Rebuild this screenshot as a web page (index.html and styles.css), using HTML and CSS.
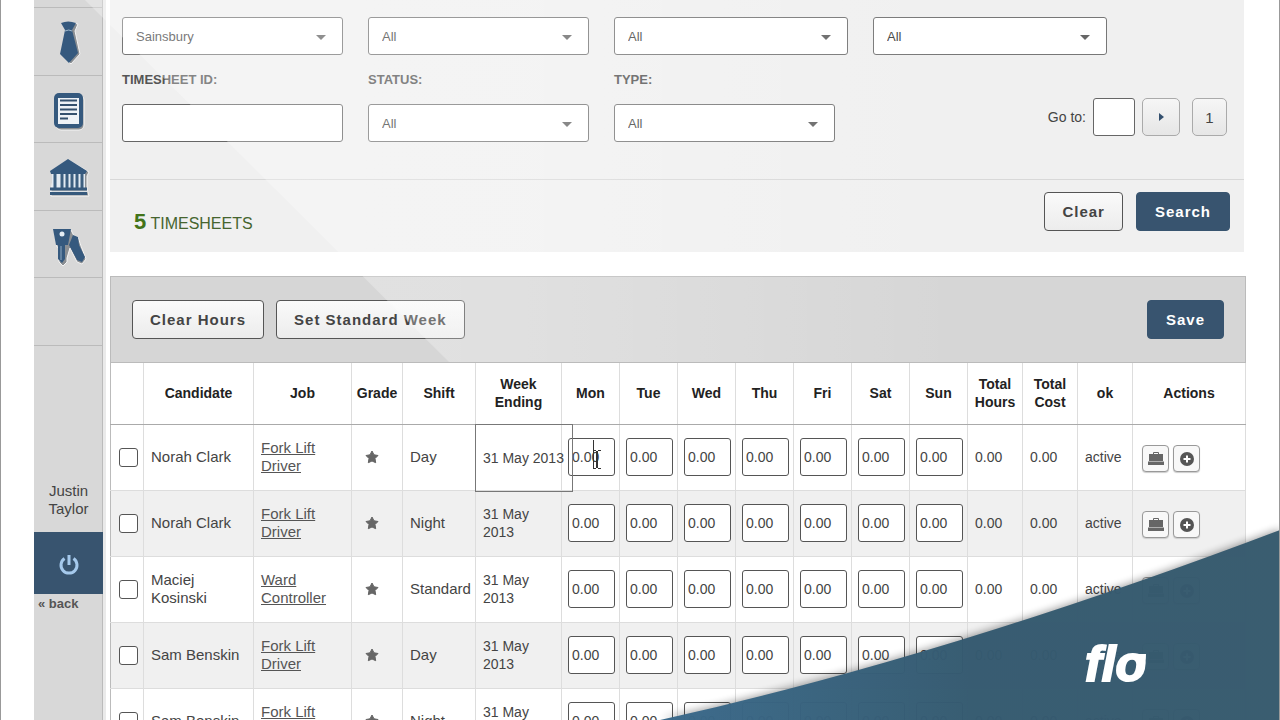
FILE: index.html
```html
<!DOCTYPE html>
<html lang="en">
  <head>
    <meta charset="UTF-8" />
    <meta name="viewport" content="width=device-width, initial-scale=1.0" />
    <title>Timesheets</title>
    <link rel="stylesheet" href="styles.css">
  </head>
  <body>
    <aside class="sidebar">
      <nav class="side-nav">
        <a href="#" aria-label="Candidates">
          <svg width="26" height="44" viewBox="0 0 26 44">
            <path class="icon-edge" d="M6 3q7-3 15 0l-3 7 5 23-9 10-9-9 4-24z" transform="translate(1 0)" />
            <path class="icon-fill" d="M5 2q7-3 15 0l-4 7 6 23-9 10-9-9 5-24z" />
            <path d="M9 10q4-2 7 0" fill="none" stroke="#9fb8cc" />
          </svg>
        </a>
        <a href="#" aria-label="Timesheets">
          <svg width="34" height="40" viewBox="0 0 34 40">
            <rect class="icon-edge" x="4" y="4" width="28" height="35" rx="5" />
            <rect class="icon-fill" x="2" y="2" width="29" height="35" rx="5" />
            <rect x="6" y="7" width="21" height="26" fill="#eef2f7" />
            <path d="M8 9.500h17M8 14h17M8 18.500h17M8 23h17M8 27.500h8" stroke="#34506e" stroke-width="2" />
          </svg>
        </a>
        <a href="#" aria-label="Clients">
          <svg width="42" height="42" viewBox="0 0 42 42">
            <path class="icon-edge" d="M21 3l20 12-2 4v13l2 7H3v-7l3-13-3-4z" />
            <path class="icon-fill" d="M20 2l19 12-2 3H3l-1-3z" />
            <path d="M4 17h33v14H4z" fill="#e3ebf2" />
            <path d="M7 17v14M14 17v14M19 17v14M24 17v14M29 17v14M34 17v14" stroke="#3c5f80" stroke-width="3" />
            <path d="M2 32h37M2 36.500h37" stroke="#36597c" stroke-width="3" />
            <path d="M2 34.300h37" stroke="#f0f4f8" />
          </svg>
        </a>
        <a href="#" aria-label="Access">
          <svg width="36" height="40" viewBox="0 0 36 40">
            <path class="icon-edge" d="M3 4h17l3 6 4 1 3 9 5 13-4 5-5-2-7-14-3 10v4l-4 4-4-4V21H6z" />
            <path class="icon-fill" d="M2 3h18l-3 16h-3v14l-3 4-4-4V19H5zM22 9l5 2 1 8 6 12-3 5-5-2-8-15z" />
            <circle cx="11" cy="8" r="2.500" fill="#e5edf4" />
            <path d="M10 20v14" stroke="#8faac2" />
          </svg>
        </a>
        <span></span>
      </nav>
      <p class="user-name">Justin<br>Taylor</p>
      <button class="power" aria-label="Log out">
        <svg width="22" height="22" viewBox="0 0 22 22" fill="none" stroke="#a5c9ec" stroke-width="3">
          <path d="M6.500 4.500a8 8 0 1 0 9 0M11 1v10" />
        </svg>
      </button>
      <a class="back" href="#">« back</a>
    </aside>

    <main>
      <section class="filters">
        <div class="filter-row">
          <div class="select"><select aria-label="Client"><option>Sainsbury</option></select></div>
          <div class="select"><select aria-label="Site"><option>All</option></select></div>
          <div class="select wide"><select aria-label="Job"><option>All</option></select></div>
          <div class="select wide"><select aria-label="Candidate"><option>All</option></select></div>
        </div>
        <div class="filter-row second">
          <div class="field">
            <label for="timesheet-id">TIMESHEET ID:</label>
            <input type="text" id="timesheet-id" />
          </div>
          <div class="field">
            <label for="status">STATUS:</label>
            <div class="select"><select id="status"><option>All</option></select></div>
          </div>
          <div class="field">
            <label for="type">TYPE:</label>
            <div class="select"><select id="type"><option>All</option></select></div>
          </div>
          <div class="pager">
            <label for="page">Go to:</label>
            <input type="text" id="page" />
            <button class="page-btn" aria-label="Go"><span class="arrow"></span></button>
            <button class="page-btn number">1</button>
          </div>
        </div>
        <div class="filter-footer">
          <p class="count"><strong>5</strong> TIMESHEETS</p>
          <button class="btn">Clear</button>
          <button class="btn primary">Search</button>
        </div>
      </section>

      <section class="sheets">
        <div class="toolbar">
          <button class="btn">Clear Hours</button>
          <button class="btn">Set Standard Week</button>
          <button class="btn primary">Save</button>
        </div>
        <table>
          <colgroup>
            <col class="c-check"><col class="c-name"><col class="c-job"><col class="c-grade"><col class="c-shift"><col class="c-week">
            <col class="c-day" span="7">
            <col class="c-total" span="3"><col>
          </colgroup>
          <thead>
            <tr>
              <th></th><th>Candidate</th><th>Job</th><th>Grade</th><th>Shift</th><th>Week Ending</th>
              <th>Mon</th><th>Tue</th><th>Wed</th><th>Thu</th><th>Fri</th><th>Sat</th><th>Sun</th>
              <th>Total Hours</th><th>Total Cost</th><th>ok</th><th>Actions</th>
            </tr>
          </thead>
          <tbody id="rows"></tbody>
        </table>
      </section>
    </main>

    <div class="sheen"></div>
    <svg class="corner" width="620" height="190" viewBox="0 0 620 190">
      <defs>
        <linearGradient id="blue">
          <stop offset="0" stop-color="#3b6a8b" />
          <stop offset="0.5" stop-color="#355a70" />
          <stop offset="1" stop-color="#375a6e" />
        </linearGradient>
      </defs>
      <path class="wedge" d="M0 190Q285 127 620 0V190z" fill="url(#blue)" />
      <text class="logo" x="425" y="151">flo</text>
      <path d="M472 124h14q0 9-2 15l-5-7z" fill="#fff" />
    </svg>

    <script>
      const days = ['Mon', 'Tue', 'Wed', 'Thu', 'Fri', 'Sat', 'Sun'];
      const timesheets = [
        { name: 'Norah Clark', job: 'Fork Lift Driver', shift: 'Day', open: true },
        { name: 'Norah Clark', job: 'Fork Lift Driver', shift: 'Night' },
        { name: 'Maciej Kosinski', job: 'Ward Controller', shift: 'Standard' },
        { name: 'Sam Benskin', job: 'Fork Lift Driver', shift: 'Day' },
        { name: 'Sam Benskin', job: 'Fork Lift Driver', shift: 'Night' }
      ];

      const star = '<svg width="14" height="14" viewBox="0 0 14 14"><path d="M7 1l2 3.800 4 .700-3 3 .700 4.200L7 11l-3.700 1.700L4 8.500l-3-3 4-.700z" fill="#666" stroke="#666" stroke-linejoin="round"/></svg>';
      const briefcase = '<svg width="16" height="16" viewBox="0 0 16 16"><path d="M5.500 3.500v-2h5v2" fill="none" stroke="#666"/><path d="M1 3h14v7H1zM0 10.500h16V14H0z" fill="#666"/></svg>';
      const plus = '<svg width="16" height="16" viewBox="0 0 16 16"><circle cx="8" cy="8" r="7" fill="#555"/><path d="M8 4.500v7M4.500 8h7" stroke="#fff" stroke-width="2"/></svg>';
      const cursor = '<svg class="cursor" width="12" height="30" viewBox="0 0 12 30" fill="none" stroke="#333"><path d="M2.500 0v28M2 10.500h3M7 10.500h3M2 28.500h3M7 28.500h3" /><path d="M6 11v17" stroke-width="2"/></svg>';

      document.getElementById('rows').innerHTML = timesheets.map(t => `
        <tr>
          <td class="check"><input type="checkbox" aria-label="Select ${t.name}" /></td>
          <td>${t.name}</td>
          <td><a href="#">${t.job}</a></td>
          <td class="grade">${star}</td>
          <td>${t.shift}</td>
          <td class="week">${t.open ? '<div class="week-open">31 May 2013</div>' : '31 May 2013'}</td>
          ${days.map((d, i) => `<td class="day"><input type="text" value="0.00" aria-label="${d}" />${t.open && i === 0 ? cursor : ''}</td>`).join('')}
          <td class="total">0.00</td>
          <td class="total">0.00</td>
          <td class="total">active</td>
          <td class="actions"><div><button aria-label="Job">${briefcase}</button><button aria-label="Add">${plus}</button></div></td>
        </tr>`).join('');
    </script>
  </body>
</html>
```
FILE: styles.css
```css
* {
  box-sizing: border-box;
}
body {
  font-family: "Liberation Sans", Arial, sans-serif;
  font-size: 15px;
  line-height: 18px;
  color: #444;
  background-color: #fff;
  margin: 0;
  padding: 0 33px;
  height: 100vh;
  border-left: 1px solid #999;
  border-right: 1px solid #999;
  display: flex;
  position: relative;
  overflow: hidden;
}
p {
  margin: 0;
}
button, input, select {
  font-family: inherit;
  color: #444;
}

/* sidebar */
.sidebar {
  width: 72px;
  flex: none;
  background-color: #d8d8d8;
  border-right: 3px solid #eaeaea;
  box-shadow: inset -1px 0 0 #bbb;
  padding-top: 7px;
  display: flex;
  flex-direction: column;
}
.side-nav {
  height: 339px;
  display: grid;
  grid-template-rows: repeat(5, 1fr);
  border-bottom: 1px solid #bbb;
}
.side-nav a, .side-nav span {
  border-top: 1px solid #bbb;
  padding-top: 4px;
  display: flex;
  align-items: center;
  justify-content: center;
}
.icon-edge {
  fill: #8b8f93;
  stroke: #f3f3f3;
}
.icon-fill {
  fill: #35597e;
}
.user-name {
  margin-top: 136px;
  margin-bottom: 14px;
  text-align: center;
}
.power {
  background-color: #38546f;
  border: none;
  height: 62px;
  padding: 4px 0 0;
  display: flex;
  align-items: center;
  justify-content: center;
}
.back {
  font-size: 13px;
  line-height: 20px;
  font-weight: bold;
  color: #555;
  text-decoration: none;
  margin-left: 4px;
}

main {
  flex: 1;
  min-width: 0;
  margin-left: 4px;
}

/* filters */
.filters {
  background-color: #f0f0f0;
  padding-top: 17px;
  margin-right: 2px;
}
.filter-row {
  display: flex;
  gap: 25px;
  padding: 0 17px 0 12px;
}
.second {
  margin-top: 16px;
  padding-bottom: 37px;
  align-items: flex-end;
}
.select {
  position: relative;
  width: 221px;
}
.wide {
  width: 234px;
}
.select select {
  appearance: none;
  width: 100%;
  height: 38px;
  padding: 0 13px;
  font-size: 13px;
  background-color: #fff;
  border: 1px solid #777;
  border-radius: 3px;
}
.select::after {
  content: "";
  position: absolute;
  right: 17px;
  top: 18px;
  border: 5px solid transparent;
  border-top-color: #666;
  border-bottom: none;
}
.field {
  width: 221px;
}
.field label {
  display: block;
  font-size: 13px;
  font-weight: bold;
  color: #555;
  margin-bottom: 15px;
}
.field input, .pager input {
  display: block;
  width: 100%;
  height: 38px;
  background-color: #fff;
  border: 1px solid #666;
  border-radius: 3px;
}
.pager {
  margin-left: auto;
  margin-bottom: 6px;
  display: flex;
  align-items: center;
  gap: 7px;
  font-size: 14px;
}
.pager input {
  width: 42px;
}
.page-btn {
  width: 38px;
  height: 38px;
  padding: 0;
  background: linear-gradient(#f6f6f6, #e6e6e6);
  border: 1px solid #aaa;
  border-radius: 5px;
  font-size: 15px;
  display: flex;
  align-items: center;
  justify-content: center;
}
.number {
  width: 35px;
  margin-left: 5px;
}
.arrow {
  border: 4px solid transparent;
  border-left: 5px solid #34506e;
  border-right: none;
}
.filter-footer {
  border-top: 1px solid #d8d8d8;
  height: 73px;
  padding: 12px 14px 0 24px;
  display: flex;
  align-items: flex-start;
  gap: 13px;
}
.count {
  flex: 1;
  padding-top: 11px;
  font-size: 16px;
  line-height: 38px;
  color: #46652f;
}
.count strong {
  font-size: 22px;
  color: #43741a;
}
.btn {
  height: 39px;
  padding: 0 17px;
  font-size: 15px;
  font-weight: bold;
  letter-spacing: 1px;
  background: linear-gradient(#fafafa, #ececec);
  border: 1px solid #555;
  border-radius: 4px;
}
.primary {
  padding: 0 18px;
  color: #fff;
  background: #38546f;
  border-color: #38546f;
}

/* timesheet table */
.sheets {
  margin-top: 24px;
}
.toolbar {
  background-color: #d6d6d6;
  border: 1px solid #bbb;
  height: 87px;
  padding: 0 21px;
  display: flex;
  align-items: center;
  gap: 12px;
}
.toolbar .primary {
  margin-left: auto;
}
table {
  width: 100%;
  table-layout: fixed;
  border-collapse: collapse;
  border-left: 1px solid #bbb;
  border-right: 1px solid #bbb;
}
.c-check { width: 33px; }
.c-name { width: 110px; }
.c-job { width: 98px; }
.c-grade { width: 51px; }
.c-shift { width: 73px; }
.c-week { width: 86px; }
.c-day { width: 58px; }
.c-total { width: 55px; }
th {
  height: 61px;
  padding: 0 2px;
  font-size: 14px;
  color: #222;
  border-right: 1px solid #ddd;
  border-bottom: 1px solid #aaa;
}
td {
  height: 66px;
  padding: 0 4px 0 7px;
  border-right: 1px solid #ddd;
  border-bottom: 1px solid #ddd;
}
tbody tr:nth-child(even) {
  background-color: #f0f0f0;
}
td a {
  color: #555;
}
td.check, td.day {
  padding: 0 0 0 6px;
  position: relative;
}
.check input {
  appearance: none;
  display: block;
  width: 19px;
  height: 19px;
  margin: 0 0 0 2px;
  background-color: #fff;
  border: 1px solid #555;
  border-radius: 3px;
}
.day input {
  display: block;
  width: 47px;
  height: 38px;
  padding: 0 3px;
  font-size: 14px;
  background-color: #fff;
  border: 1px solid #555;
  border-radius: 3px;
}
td.grade {
  padding: 4px 0 0 13px;
}
.week, .total {
  font-size: 14px;
}
.week {
  position: relative;
  padding-right: 14px;
}
.week-open {
  position: absolute;
  z-index: 1;
  top: -1px;
  left: -1px;
  width: 98px;
  height: 68px;
  padding-left: 7px;
  line-height: 66px;
  white-space: nowrap;
  border: 1px solid #777;
}
.cursor {
  position: absolute;
  left: 29px;
  top: 15px;
}
.actions div {
  display: flex;
  gap: 4px;
  padding: 3px 0 0 2px;
}
.actions button {
  width: 27px;
  height: 27px;
  padding: 0;
  background-color: #f8f8f8;
  border: 1px solid #999;
  border-radius: 4px;
  box-shadow: 0 1px 1px #ccc;
  display: flex;
  align-items: center;
  justify-content: center;
}

/* overlays */
.sheen {
  position: absolute;
  inset: 0 0 auto 0;
  height: 362px;
  background: linear-gradient(90deg, rgba(255, 255, 255, 0.3), rgba(255, 255, 255, 0.25) 40%, rgba(255, 255, 255, 0) 75%);
  clip-path: polygon(84px 0, 100% 0, 100% 100%, 448px 100%);
  pointer-events: none;
}
.corner {
  position: absolute;
  right: -1px;
  bottom: 0;
  overflow: visible;
  pointer-events: none;
}
.wedge {
  opacity: 0.98;
  filter: drop-shadow(0 -1px 4px rgba(0, 0, 0, 0.4));
}
.logo {
  font-family: "Liberation Sans", Arial, sans-serif;
  font-size: 50px;
  font-weight: bold;
  font-style: italic;
  fill: #fff;
  stroke: #fff;
  stroke-width: 2px;
}
```
